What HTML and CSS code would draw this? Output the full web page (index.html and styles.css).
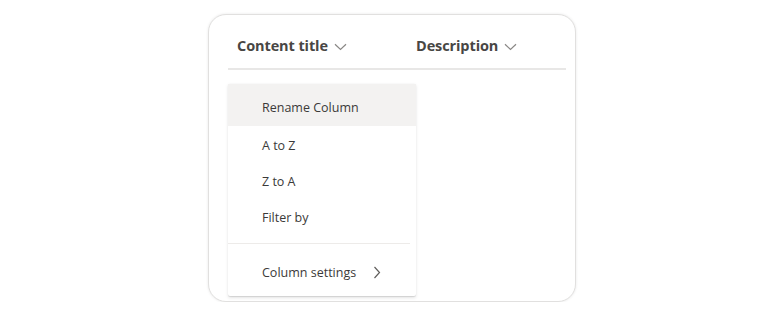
FILE: index.html
```html
<!DOCTYPE html>
<html>
<head>
<meta charset="utf-8">
<link rel="stylesheet" href="styles.css">
</head>
<body>
<div class="page">
  <div class="card">
    <div class="header">
      <div class="col col-title">
        <span class="col-label">Content title</span>
        <svg class="chev-down" width="13" height="8" viewBox="0 0 13 8"><path d="M1 1.2 L6.5 6.5 L12 1.2" fill="none" stroke="#8a8886" stroke-width="1.2"/></svg>
      </div>
      <div class="col col-desc">
        <span class="col-label">Description</span>
        <svg class="chev-down" width="13" height="8" viewBox="0 0 13 8"><path d="M1 1.2 L6.5 6.5 L12 1.2" fill="none" stroke="#8a8886" stroke-width="1.2"/></svg>
      </div>
    </div>
    <div class="menu">
      <div class="item item-first hover">Rename Column</div>
      <div class="item">A to Z</div>
      <div class="item">Z to A</div>
      <div class="item">Filter by</div>
      <div class="sep"></div>
      <div class="item item-sub">
        <span>Column settings</span>
        <svg class="chev-right" width="8" height="13" viewBox="0 0 8 13"><path d="M1.5 1 L6.5 6.5 L1.5 12" fill="none" stroke="#605e5c" stroke-width="1.2"/></svg>
      </div>
    </div>
  </div>
</div>
</body>
</html>
```

FILE: styles.css
```css
html, body {
  margin: 0;
  padding: 0;
  background: #ffffff;
}
body {
  font-family: "Open Sans", "Noto Sans", sans-serif;
  color: #323130;
}
.page {
  padding: 14px 0 0 208px;
}
.card {
  position: relative;
  box-sizing: border-box;
  width: 368px;
  height: 288px;
  border: 1px solid #e1e0df;
  border-radius: 18px;
  box-shadow: 0 0 3px rgba(0, 0, 0, 0.09);
  padding: 0 9px 0 19px;
  background: #fff;
}
.header {
  display: flex;
  height: 55px;
  align-items: center;
  padding-top: 8px;
  box-sizing: border-box;
  border-bottom: 2px solid #e8e7e6;
}
.col {
  display: flex;
  align-items: center;
  gap: 6px;
  padding-left: 9px;
}
.col-title {
  width: 170px;
}
.col-label {
  font-size: 14.5px;
  font-weight: 700;
  color: #484644;
  letter-spacing: -0.1px;
}
.chev-down {
  margin-top: 2px;
}
.menu {
  position: absolute;
  left: 19px;
  top: 69px;
  width: 188px;
  background: #fff;
  border-radius: 2px;
  box-shadow: 0 1.6px 3.6px rgba(0, 0, 0, 0.10), 0 0.3px 0.9px rgba(0, 0, 0, 0.10);
  padding-bottom: 7px;
}
.item {
  height: 36px;
  box-sizing: border-box;
  padding-top: 2px;
  display: flex;
  align-items: center;
  padding-left: 34px;
  font-size: 12.5px;
  color: #3b3a39;
}
.item-first {
  height: 42px;
  padding-top: 4px;
}
.hover {
  background: #f3f2f1;
}
.sep {
  height: 1px;
  background: #edebe9;
  margin: 9px 6px 9px 0;
}
.chev-right {
  margin-left: 17px;
}
```
